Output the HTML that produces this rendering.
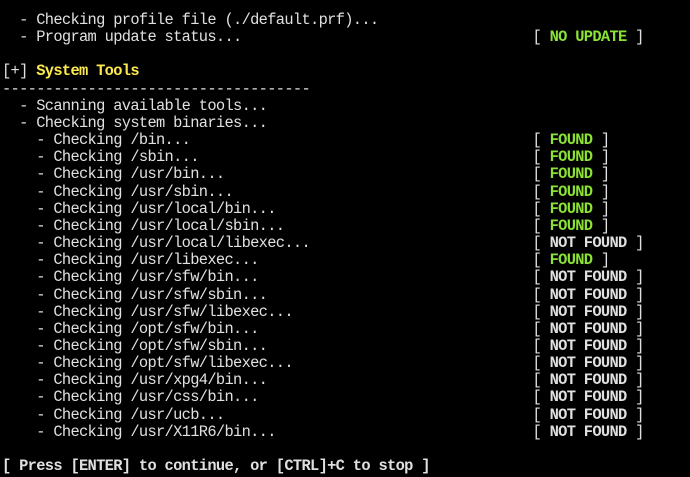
<!DOCTYPE html>
<html><head><style>
html,body{margin:0;padding:0;background:#000;width:690px;height:477px;overflow:hidden}
pre{position:absolute;left:2px;top:12px;margin:0;font-family:"Liberation Mono","DejaVu Sans Mono",monospace;font-size:15.4px;letter-spacing:-0.68px;line-height:17.15px;color:#e0e0e0;font-weight:normal;white-space:pre}
.g{color:#8ae234;font-weight:bold}
.y{color:#fce94f;font-weight:bold}
.w{font-weight:bold}
</style></head><body><pre>  - Checking profile file (./default.prf)...
  - Program update status...                                  [ <span class="g">NO UPDATE</span> ]

[+] <span class="y">System Tools</span>
------------------------------------
  - Scanning available tools...
  - Checking system binaries...
    - Checking /bin...                                        [ <span class="g">FOUND</span> ]
    - Checking /sbin...                                       [ <span class="g">FOUND</span> ]
    - Checking /usr/bin...                                    [ <span class="g">FOUND</span> ]
    - Checking /usr/sbin...                                   [ <span class="g">FOUND</span> ]
    - Checking /usr/local/bin...                              [ <span class="g">FOUND</span> ]
    - Checking /usr/local/sbin...                             [ <span class="g">FOUND</span> ]
    - Checking /usr/local/libexec...                          [ <span class="w">NOT FOUND</span> ]
    - Checking /usr/libexec...                                [ <span class="g">FOUND</span> ]
    - Checking /usr/sfw/bin...                                [ <span class="w">NOT FOUND</span> ]
    - Checking /usr/sfw/sbin...                               [ <span class="w">NOT FOUND</span> ]
    - Checking /usr/sfw/libexec...                            [ <span class="w">NOT FOUND</span> ]
    - Checking /opt/sfw/bin...                                [ <span class="w">NOT FOUND</span> ]
    - Checking /opt/sfw/sbin...                               [ <span class="w">NOT FOUND</span> ]
    - Checking /opt/sfw/libexec...                            [ <span class="w">NOT FOUND</span> ]
    - Checking /usr/xpg4/bin...                               [ <span class="w">NOT FOUND</span> ]
    - Checking /usr/css/bin...                                [ <span class="w">NOT FOUND</span> ]
    - Checking /usr/ucb...                                    [ <span class="w">NOT FOUND</span> ]
    - Checking /usr/X11R6/bin...                              [ <span class="w">NOT FOUND</span> ]

<span class="w">[ Press [ENTER] to continue, or [CTRL]+C to stop ]</span></pre></body></html>
